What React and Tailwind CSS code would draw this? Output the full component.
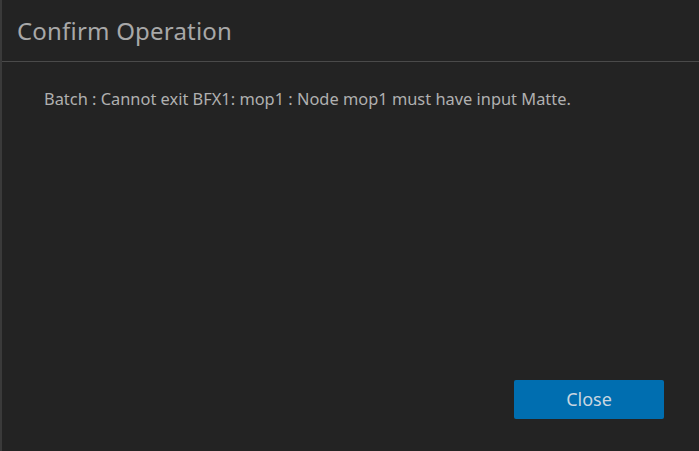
export default function App() {
  return (
    <div className="w-[699px] h-[451px] bg-[#232323] border-l-2 border-[#3a3a3a] flex flex-col text-[#b4b4b4] font-['Noto_Sans',sans-serif] overflow-hidden">
      <div className="h-[62px] border-b border-[#4a4a4a] flex items-center pl-[15px]">
        <h1 className="text-[24px] tracking-[0.2px] text-[#a8a8a8]">Confirm Operation</h1>
      </div>
      <div className="flex-1 flex flex-col pl-[42px] pr-[35px] pt-[26px] pb-[32px]">
        <p className="text-[16.4px] leading-[22px] text-[#b0b0b0]">
          Batch : Cannot exit BFX1: mop1 : Node mop1 must have input Matte.
        </p>
        <div className="flex-1" />
        <div className="flex justify-end">
          <button className="w-[150px] h-[39px] bg-[#006eb0] rounded-[2px] text-[18px] text-[#c9d6e0]">
            Close
          </button>
        </div>
      </div>
    </div>
  );
}
